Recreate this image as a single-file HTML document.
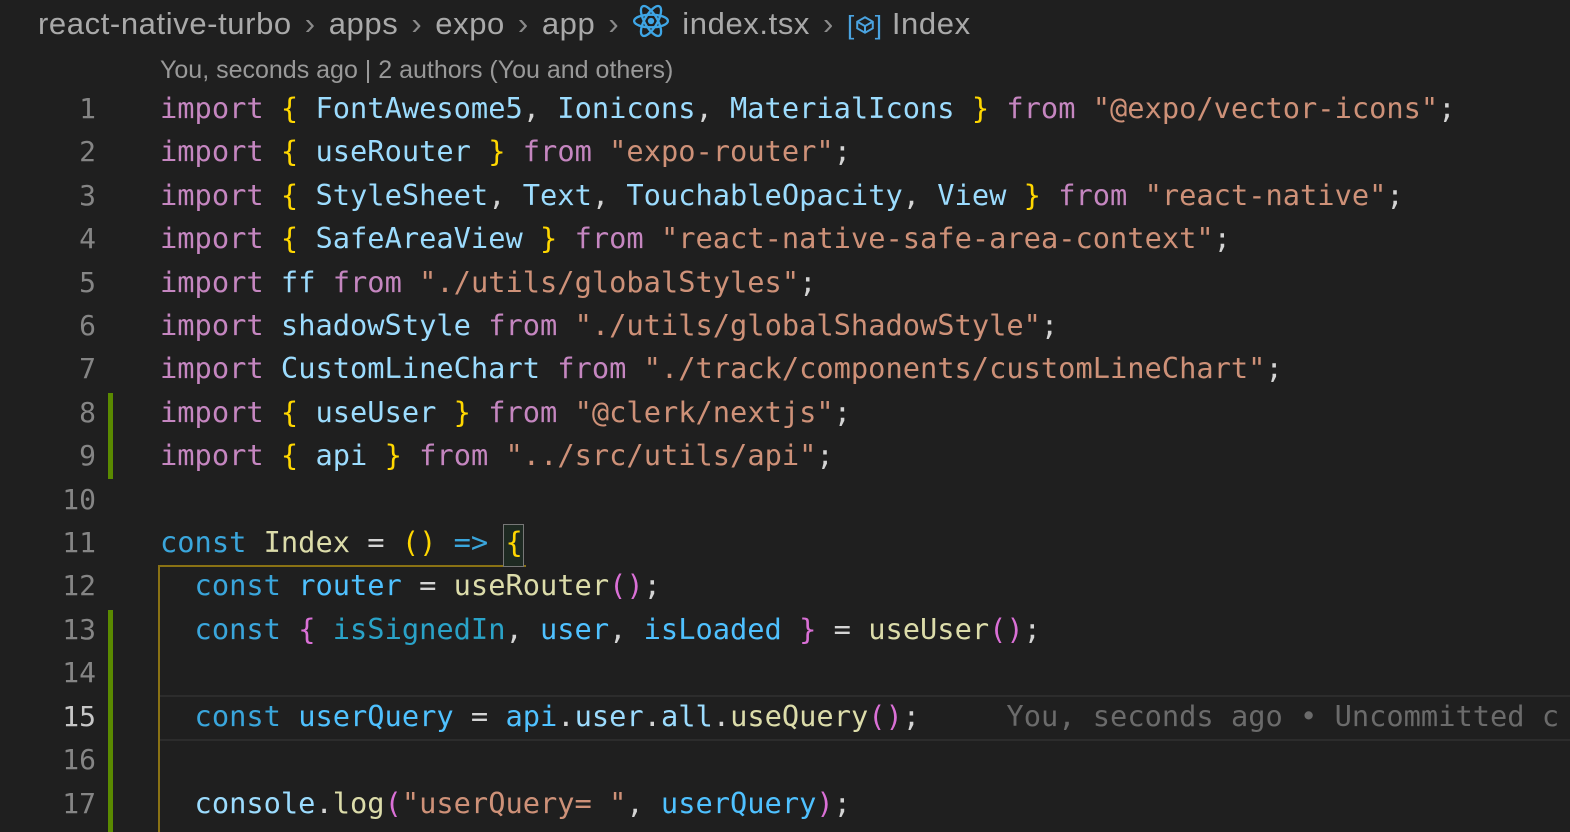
<!DOCTYPE html>
<html><head><meta charset="utf-8"><style>
html,body{margin:0;width:1570px;height:832px;overflow:hidden}
body{background:#1f1f1f;position:relative;font-family:"DejaVu Sans Mono",monospace}
.bc{position:absolute;left:38px;top:3px;font:31px "Liberation Sans",sans-serif;color:#a9a9a9;white-space:pre;letter-spacing:0.6px}
.bc .s{color:#8a8a8a;margin:0 13px}
.lens{position:absolute;left:160px;top:56px;font:25px "Liberation Sans",sans-serif;color:#999}
.ln{position:absolute;left:0;width:96px;text-align:right;font-size:28px;color:#858585;line-height:43.4px}
.code{position:absolute;left:160px;font-size:28.7px;line-height:43.4px;white-space:pre;color:#d4d4d4}
.k{color:#c586c0}.b{color:#ffd700}.i{color:#9cdcfe}.s{color:#ce9178}.c{color:#3aa6dc}.f{color:#dcdcaa}.v{color:#4fc1ff}.p{color:#da70d6}.g{color:#6b6b6b}
</style></head><body>
<div class="bc">react-native-turbo<span class="s">›</span>apps<span class="s">›</span>expo<span class="s">›</span>app<span class="s">›</span><svg width="38" height="36" viewBox="-18 -17 36 34" style="vertical-align:-5px;margin-right:12px"><g fill="none" stroke="#3ea6e6" stroke-width="2.2"><ellipse rx="16" ry="6"/><ellipse rx="16" ry="6" transform="rotate(60)"/><ellipse rx="16" ry="6" transform="rotate(120)"/></g><circle r="3" fill="#3ea6e6"/></svg>index.tsx<span class="s">›</span><span style="color:#4aa3e0;font-size:26px">[</span><svg width="20" height="20" viewBox="0 0 18 18" style="vertical-align:-1px"><path d="M9 2L16 6V12L9 16L2 12V6Z M2 6L9 10L16 6 M9 10V16" fill="none" stroke="#4aa3e0" stroke-width="1.8"/></svg><span style="color:#4aa3e0;font-size:26px">]</span> Index</div>
<div class="lens">You, seconds ago | 2 authors (You and others)</div>
<div style="position:absolute;left:160px;right:0;top:695px;height:42px;border-top:2px solid #2c2c2c;border-bottom:2px solid #2c2c2c"></div>
<div style="position:absolute;left:108px;top:393px;width:5px;height:86px;background:#5a8a00"></div>
<div style="position:absolute;left:108px;top:610px;width:5px;height:222px;background:#5a8a00"></div>
<div style="position:absolute;left:158px;top:565px;width:366px;height:267px;border-left:2px solid #8a7214;border-top:2px solid #8a7214"></div>
<div style="position:absolute;left:503px;top:524px;width:19px;height:41px;border:1px solid #777;background:#1e2a22"></div>
<div class="ln" style="top:87px">1<br>2<br>3<br>4<br>5<br>6<br>7<br>8<br>9<br>10<br>11<br>12<br>13<br>14<br><span style="color:#c6c6c6">15</span><br>16<br>17</div>
<div class="code" style="top:87px"><span class="k">import</span> <span class="b">{</span> <span class="i">FontAwesome5</span>, <span class="i">Ionicons</span>, <span class="i">MaterialIcons</span> <span class="b">}</span> <span class="k">from</span> <span class="s">"@expo/vector-icons"</span>;
<span class="k">import</span> <span class="b">{</span> <span class="i">useRouter</span> <span class="b">}</span> <span class="k">from</span> <span class="s">"expo-router"</span>;
<span class="k">import</span> <span class="b">{</span> <span class="i">StyleSheet</span>, <span class="i">Text</span>, <span class="i">TouchableOpacity</span>, <span class="i">View</span> <span class="b">}</span> <span class="k">from</span> <span class="s">"react-native"</span>;
<span class="k">import</span> <span class="b">{</span> <span class="i">SafeAreaView</span> <span class="b">}</span> <span class="k">from</span> <span class="s">"react-native-safe-area-context"</span>;
<span class="k">import</span> <span class="i">ff</span> <span class="k">from</span> <span class="s">"./utils/globalStyles"</span>;
<span class="k">import</span> <span class="i">shadowStyle</span> <span class="k">from</span> <span class="s">"./utils/globalShadowStyle"</span>;
<span class="k">import</span> <span class="i">CustomLineChart</span> <span class="k">from</span> <span class="s">"./track/components/customLineChart"</span>;
<span class="k">import</span> <span class="b">{</span> <span class="i">useUser</span> <span class="b">}</span> <span class="k">from</span> <span class="s">"@clerk/nextjs"</span>;
<span class="k">import</span> <span class="b">{</span> <span class="i">api</span> <span class="b">}</span> <span class="k">from</span> <span class="s">"../src/utils/api"</span>;

<span class="c">const</span> <span class="f">Index</span> = <span class="b">()</span> <span class="c">=&gt;</span> <span class="b">{</span>
  <span class="c">const</span> <span class="v">router</span> = <span class="f">useRouter</span><span class="p">()</span>;
  <span class="c">const</span> <span class="p">{</span> <span class="c" style="color:#2aa3c8">isSignedIn</span>, <span class="v">user</span>, <span class="v">isLoaded</span> <span class="p">}</span> = <span class="f">useUser</span><span class="p">()</span>;

  <span class="c">const</span> <span class="v">userQuery</span> = <span class="v">api</span>.<span class="i">user</span>.<span class="i">all</span>.<span class="f">useQuery</span><span class="p">()</span>;     <span class="g">You, seconds ago • Uncommitted c</span>

  <span class="i">console</span>.<span class="f">log</span><span class="p">(</span><span class="s">"userQuery= "</span>, <span class="v">userQuery</span><span class="p">)</span>;</div>
</body></html>
